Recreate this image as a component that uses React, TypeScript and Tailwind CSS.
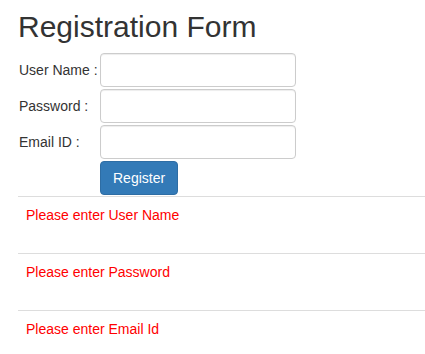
import { useState } from "react"

export default function App() {
  const [userName, setUserName] = useState("")
  const [password, setPassword] = useState("")
  const [email, setEmail] = useState("")

  const fields = [
    { label: "User Name :", value: userName, set: setUserName, type: "text" },
    { label: "Password :", value: password, set: setPassword, type: "password" },
    { label: "Email ID :", value: email, set: setEmail, type: "email" },
  ]

  const errors = ["Please enter User Name", "Please enter Password", "Please enter Email Id"]

  return (
    <div className="min-h-screen bg-white pl-[18px] pt-[10px] font-['Liberation_Sans',Arial,sans-serif] text-sm text-[#333]">
      <h2 className="mb-[10px] text-[30px] leading-[33px] font-normal">Registration Form</h2>

      <form onSubmit={(e) => e.preventDefault()}>
        {fields.map((f) => (
          <div key={f.label} className="mb-[2px] flex items-center">
            <label className="w-[82px] pl-px leading-5">{f.label}</label>
            <input
              type={f.type}
              value={f.value}
              onChange={(e) => f.set(e.target.value)}
              className="h-[34px] w-[196px] rounded-[4px] border border-[#ccc] px-3 shadow-[inset_0_1px_1px_rgba(0,0,0,0.075)] outline-none"
            />
          </div>
        ))}
        <div className="pl-[82px]">
          <button
            type="submit"
            className="h-[34px] rounded-[4px] border border-[#2e6da4] bg-[#337ab7] px-3 leading-5 text-white"
          >
            Register
          </button>
        </div>
      </form>

      <div className="mt-px">
        {errors.map((msg) => (
          <div key={msg} className="border-t border-[#ddd] p-2 leading-5 text-[#f00]">
            <div>{msg}</div>
            <div className="h-5" />
          </div>
        ))}
      </div>
    </div>
  )
}
